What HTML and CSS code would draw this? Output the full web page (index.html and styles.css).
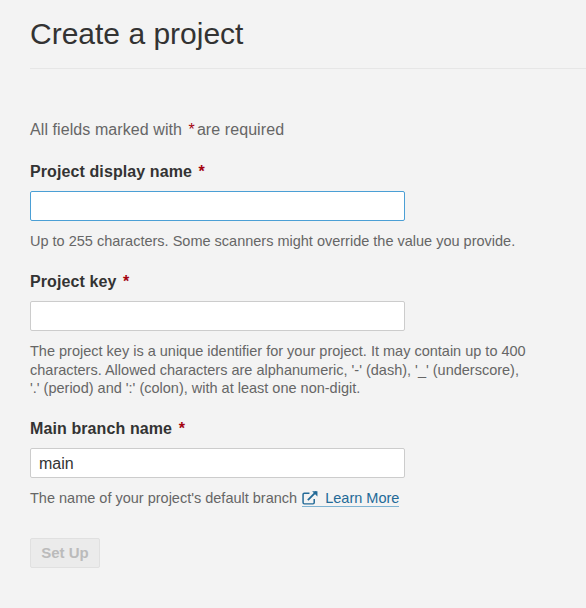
FILE: index.html
```html
<!DOCTYPE html>
<html lang="en">
<head>
  <meta charset="UTF-8" />
  <title>Create a project</title>
  <link rel="stylesheet" href="styles.css">
</head>
<body>
  <div class="page">
    <header class="page-header">
      <h1>Create a project</h1>
    </header>

    <form class="project-form">
      <p class="required-note">All fields marked with <span class="star">*</span>are required</p>

      <!-- Display name -->
      <div class="field">
        <label for="display-name">Project display name <span class="star">*</span></label>
        <input class="text-input focused" id="display-name" type="text" />
        <p class="hint">Up to 255 characters. Some scanners might override the value you provide.</p>
      </div>

      <!-- Key -->
      <div class="field">
        <label for="project-key">Project key <span class="star">*</span></label>
        <input class="text-input" id="project-key" type="text" />
        <p class="hint">The project key is a unique identifier for your project. It may contain up to 400 characters. Allowed characters are alphanumeric, '-' (dash), '_' (underscore), '.' (period) and ':' (colon), with at least one non-digit.</p>
      </div>

      <!-- Branch -->
      <div class="field">
        <label for="branch-name">Main branch name <span class="star">*</span></label>
        <input class="text-input" id="branch-name" type="text" value="main" />
        <p class="hint">The name of your project's default branch
          <a class="learn-more" href="#">
            <svg width="17" height="15" viewBox="0 0 16 14" fill="none" stroke="currentColor" stroke-width="1.4">
              <path d="M7 3H2.2C1.5 3 1 3.5 1 4.2v7.6c0 .7.5 1.2 1.2 1.2h8.1c.7 0 1.2-.5 1.2-1.2V8.5" />
              <path d="M5.5 9.5L13.5 1.5" stroke-width="1.8" />
              <path d="M9.5 1h5v5z" fill="currentColor" stroke="none" />
            </svg>
            Learn More</a>
        </p>
      </div>

      <button class="submit-button" type="button" disabled>Set Up</button>
    </form>
  </div>
</body>
</html>
```

FILE: styles.css
```css
* {
  box-sizing: border-box;
  margin: 0;
  padding: 0;
}

html, body {
  height: 100%;
  background-color: #f3f3f3;
  font-family: 'Liberation Sans', Arial, sans-serif;
  overflow: hidden;
}

.page {
  padding-left: 30px;
}

/* Header */
.page-header {
  height: 69px;
  padding-top: 17px;
  border-bottom: 1px solid #e6e6e6;
}

.page-header h1 {
  font-size: 30px;
  line-height: 34px;
  font-weight: 400;
  color: #333;
}

/* Form */
.project-form {
  width: 510px;
  padding-top: 52px;
}

.required-note {
  font-size: 16px;
  line-height: 18px;
  letter-spacing: 0.08px;
  color: #666;
  margin-bottom: 24px;
}

.star {
  color: #a4030f;
  margin-left: 2px;
  margin-right: 2px;
}

.field {
  margin-bottom: 23px;
}

.field label {
  display: block;
  font-size: 16px;
  line-height: 18px;
  letter-spacing: 0.1px;
  font-weight: 700;
  color: #333;
  margin-bottom: 10px;
}

.text-input {
  display: block;
  width: 375px;
  height: 30px;
  padding: 1px 8px 0;
  background-color: #fff;
  border: 1px solid #ccc;
  border-radius: 2px;
  font-family: inherit;
  font-size: 16px;
  color: #333;
  outline: none;
}

.text-input.focused {
  border-color: #4b9fd5;
}

.hint {
  margin-top: 11px;
  width: 500px;
  font-size: 14.5px;
  line-height: 18.33px;
  color: #666;
}

.learn-more {
  color: #236a97;
  text-decoration: none;
  border-bottom: 1px solid #7fb3d2;
  margin-left: 1px;
}

.learn-more svg {
  vertical-align: -2px;
  margin-right: 2px;
}

.submit-button {
  display: block;
  width: 70px;
  height: 30px;
  margin-top: 30.5px;
  padding-bottom: 1px;
  background-color: #ebebeb;
  border: 1px solid #e0e0e0;
  border-radius: 2px;
  font-family: inherit;
  font-size: 15px;
  font-weight: 700;
  color: #bbb;
}
```
